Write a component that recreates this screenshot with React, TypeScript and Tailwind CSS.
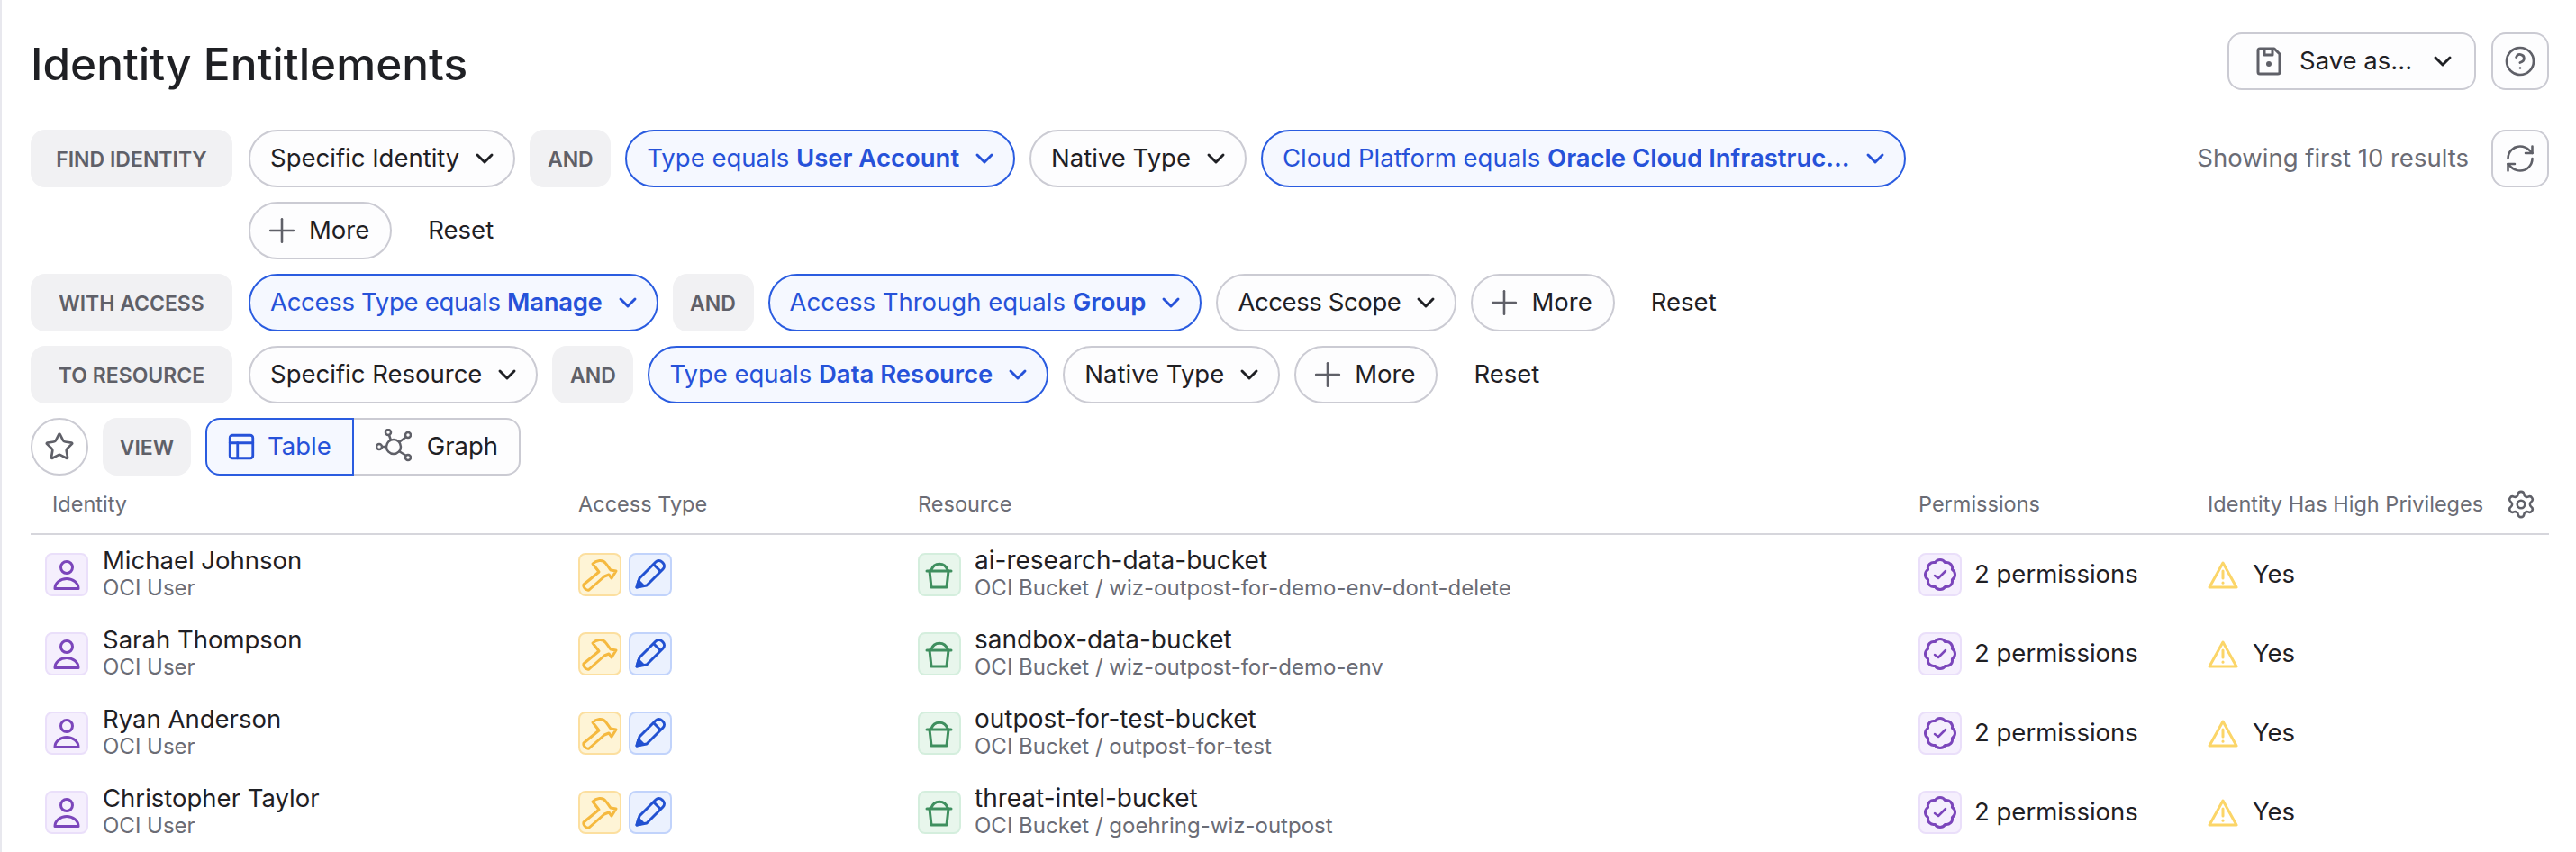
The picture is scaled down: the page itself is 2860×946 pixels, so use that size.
import React from "react";
import { ChevronDown, CircleHelp, PanelsTopLeft, Plus, RefreshCw, Settings, Star } from "lucide-react";

const chipBase =
  "flex h-16 shrink-0 items-center gap-3 rounded-full border-2 pl-[22px] pr-[16px] text-[27.5px] whitespace-nowrap";

const Chip = ({ label, tracking = "" }: { label: string; tracking?: string }) => (
  <button className={`${chipBase} border-[#cbcbd3] bg-[#fdfdfe] text-[#1f2024]`}>
    <span className={tracking}>{label}</span>
    <ChevronDown size={32} strokeWidth={2.2} />
  </button>
);

const ActiveChip = ({ label, value, tracking = "" }: { label: string; value: string; tracking?: string }) => (
  <button className={`${chipBase} border-[#2a5ce0] bg-[#f5f8ff] text-[#2652d9]`}>
    <span className={tracking}>
      {label} <span className="font-semibold">{value}</span>
    </span>
    <ChevronDown size={32} strokeWidth={2.2} />
  </button>
);

const Tag = ({ children, width }: { children: React.ReactNode; width: string }) => (
  <div
    className={`flex h-16 shrink-0 items-center justify-center rounded-2xl bg-[#f1f1f3] pt-0.5 text-[23px] font-semibold text-[#5f6068] ${width}`}
  >
    {children}
  </div>
);

const More = () => (
  <button className="flex h-16 shrink-0 items-center gap-2 rounded-full border-2 border-[#cbcbd3] bg-[#fdfdfe] pl-[13px] pr-[23px] text-[27.5px] text-[#1f2024]">
    <Plus size={44} strokeWidth={1.4} className="text-[#5f6068]" />
    More
  </button>
);

const Reset = () => <button className="ml-6 text-[27.5px] text-[#1f2024]">Reset</button>;

const IconBox = ({ tone, children }: { tone: string; children: React.ReactNode }) => (
  <div className={`flex h-12 w-12 shrink-0 items-center justify-center rounded-lg border-2 ${tone}`}>
    <svg
      width="44"
      height="44"
      viewBox="2 2 44 44"
      fill="none"
      stroke="currentColor"
      strokeWidth="3"
      strokeLinecap="round"
      strokeLinejoin="round"
    >
      {children}
    </svg>
  </div>
);

const purple = "border-[#eadffa] bg-[#f5effd] text-[#7b46bb]";

const UserIcon = () => (
  <IconBox tone={purple}>
    <circle cx="24" cy="16" r="6.5" />
    <path d="M11 39.5a13 11 0 0 1 26 0z" />
  </IconBox>
);

const HammerIcon = () => (
  <IconBox tone="border-[#fcdf9f] bg-[#fef4d6] text-[#f5b93f]">
    <path d="M23 21 16 12C20 8 27 7 30 11C33 14 34 17 36 19L42 20 37 28 34 24 29 26 12 41C9 42 5 38 6 35Z" />
  </IconBox>
);

const PencilIcon = () => (
  <IconBox tone="border-[#c1d3fb] bg-[#ebf1fe] text-[#2251d1]">
    <path d="M9 38 12 28 30 10C32 8 35 8 37 10L38 11C40 13 40 16 38 18L20 36Z" />
    <path d="M9 38 11 31 16 36Z" fill="currentColor" />
    <path d="M28 13 35 20" />
  </IconBox>
);

const BucketIcon = () => (
  <IconBox tone="border-[#d4eedd] bg-[#e8f6ec] text-[#3f8f5f]">
    <path d="M15 19A9.5 10 0 0 1 33 19" />
    <path d="M10 20H37" />
    <path d="M13 20 15 38H32L34 20" />
  </IconBox>
);

// eight bumps round the badge
const badgePath =
  Array.from({ length: 8 }, (_, i) => {
    const a = ((i + 0.5) * Math.PI) / 4;
    const x = (24 + 14.5 * Math.cos(a)).toFixed(2);
    const y = (24 + 14.5 * Math.sin(a)).toFixed(2);
    return i === 0 ? `M${x} ${y}` : `A6.5 6.5 0 0 1 ${x} ${y}`;
  }).join("") +
  `A6.5 6.5 0 0 1 ${(24 + 14.5 * Math.cos(Math.PI / 8)).toFixed(2)} ${(24 + 14.5 * Math.sin(Math.PI / 8)).toFixed(2)}Z`;

const BadgeIcon = () => (
  <IconBox tone={purple}>
    <path d={badgePath} />
    <path d="M18 25 22 28 30 20" strokeWidth="2.5" />
  </IconBox>
);

const WarnIcon = () => (
  <svg width="34" height="32" viewBox="0 0 34 32" fill="none" stroke="#fbd568" strokeWidth="3" strokeLinecap="round" strokeLinejoin="round">
    <path d="M17 3 32 30H2Z" />
    <path d="M17 12V20" />
    <path d="M17 25V25.2" />
  </svg>
);

const SaveIcon = () => (
  <svg width="28" height="32" viewBox="0 0 28 32" fill="none" stroke="#5f6068" strokeWidth="3" strokeLinejoin="round">
    <path d="M2 4a2 2 0 0 1 2-2h16l6 6v20a2 2 0 0 1-2 2H4a2 2 0 0 1-2-2Z" />
    <path d="M9 2v7h9V2" />
    <circle cx="14" cy="19" r="3" fill="#5f6068" stroke="none" />
  </svg>
);

const GraphIcon = () => (
  <svg width="40" height="40" viewBox="0 0 40 40" fill="none" stroke="#5f6068" strokeWidth="2.5">
    <circle cx="20" cy="20" r="8" />
    <circle cx="14" cy="4" r="3" />
    <circle cx="36" cy="7" r="3" />
    <circle cx="4" cy="20" r="3" />
    <circle cx="36" cy="32" r="3" />
    <path d="M15 7 17 13M34 9 26 15M7 20H12M34 30 26 25" />
  </svg>
);

const SquareButton = ({ children }: { children: React.ReactNode }) => (
  <button className="flex h-16 w-16 shrink-0 items-center justify-center rounded-2xl border-2 border-[#cbcbd3] bg-[#fdfdfe] text-[#5f6068]">
    {children}
  </button>
);

const columns = "grid grid-cols-[608px_377px_1111px_321px_1fr] items-center";

const rows = [
  { name: "Michael Johnson", bucket: "ai-research-data-bucket", path: "OCI Bucket / wiz-outpost-for-demo-env-dont-delete" },
  { name: "Sarah Thompson", bucket: "sandbox-data-bucket", path: "OCI Bucket / wiz-outpost-for-demo-env" },
  { name: "Ryan Anderson", bucket: "outpost-for-test-bucket", path: "OCI Bucket / outpost-for-test" },
  { name: "Christopher Taylor", bucket: "threat-intel-bucket", path: "OCI Bucket / goehring-wiz-outpost" },
];

const TwoLines = ({ top, bottom, size }: { top: string; bottom: string; size: string }) => (
  <div className="flex flex-col">
    <span className={`${size} leading-[30px] text-[#1f2024]`}>{top}</span>
    <span className="text-[24px] leading-8 text-[#6b6c75]">{bottom}</span>
  </div>
);

export default function App() {
  return (
    <div
      className="h-[946px] overflow-hidden border-l-2 border-[#e8e8ee] bg-white pl-8 pr-[30px] pt-9"
      style={{ fontFamily: "Inter, 'Liberation Sans', sans-serif" }}
    >
      <div className="flex h-16 items-center justify-between">
        <h1 className="mt-[7px] text-[49.5px] font-medium text-[#1f2024]">Identity Entitlements</h1>
        <div className="flex gap-[17px]">
          <button className="flex h-16 w-[276px] items-center gap-[20px] rounded-2xl border-2 border-[#cbcbd3] bg-[#fdfdfe] pl-[30px] text-[27.5px] text-[#1f2024]">
            <SaveIcon />
            Save as...
            <ChevronDown size={32} strokeWidth={2.2} className="-ml-[2px]" />
          </button>
          <SquareButton>
            <CircleHelp size={36} strokeWidth={1.8} />
          </SquareButton>
        </div>
      </div>

      <div className="mt-11 flex flex-col gap-4">
        <div className="flex items-start gap-4">
          <Tag width="mr-0.5 w-56">FIND IDENTITY</Tag>
          <div className="flex w-[1900px] flex-wrap items-center gap-x-4 gap-y-4">
            <Chip label="Specific Identity" />
            <Tag width="w-[90px]">AND</Tag>
            <ActiveChip label="Type equals" value="User Account" />
            <Chip label="Native Type" />
            <ActiveChip label="Cloud Platform equals" value="Oracle Cloud Infrastruc..." />
            <More />
            <Reset />
          </div>
          <div className="ml-auto flex items-center gap-[25px]">
            <span className="text-[27.5px] text-[#6b6c75]">Showing first 10 results</span>
            <SquareButton>
              <RefreshCw size={36} strokeWidth={1.7} />
            </SquareButton>
          </div>
        </div>

        <div className="flex items-center gap-4">
          <Tag width="mr-0.5 w-56">WITH ACCESS</Tag>
          <ActiveChip label="Access Type equals" value="Manage" tracking="tracking-[-0.3px]" />
          <Tag width="w-[90px]">AND</Tag>
          <ActiveChip label="Access Through equals" value="Group" />
          <Chip label="Access Scope" tracking="tracking-[-0.4px]" />
          <More />
          <Reset />
        </div>

        <div className="flex items-center gap-4">
          <Tag width="mr-0.5 w-56">TO RESOURCE</Tag>
          <Chip label="Specific Resource" />
          <Tag width="w-[90px]">AND</Tag>
          <ActiveChip label="Type equals" value="Data Resource" />
          <Chip label="Native Type" />
          <More />
          <Reset />
        </div>

        <div className="flex items-center">
          <button className="flex h-16 w-16 items-center justify-center rounded-full border-2 border-[#cbcbd3] text-[#5f6068]">
            <Star size={34} strokeWidth={1.9} />
          </button>
          <div className="ml-4">
            <Tag width="w-[98px]">VIEW</Tag>
          </div>
          <div className="ml-4 flex h-16">
            <button className="flex items-center gap-3 rounded-l-2xl border-2 border-[#2a5ce0] bg-[#f5f8ff] pl-[21px] pr-[23px] text-[27.5px] text-[#2652d9]">
              <PanelsTopLeft size={34} strokeWidth={2} />
              Table
            </button>
            <button className="flex items-center gap-[17px] rounded-r-2xl border-2 border-l-0 border-[#cbcbd3] bg-[#fdfdfe] pl-6 pr-[23px] text-[27.5px] text-[#1f2024]">
              <GraphIcon />
              Graph
            </button>
          </div>
        </div>
      </div>

      <div className={`${columns} h-[66px] border-b-2 border-[#d6d6dc] text-[23.5px] text-[#6b6c75]`}>
        <span className="pl-6">Identity</span>
        <span>Access Type</span>
        <span>Resource</span>
        <span>Permissions</span>
        <div className="flex items-center justify-between pr-[14px]">
          <span>Identity Has High Privileges</span>
          <Settings size={34} strokeWidth={1.8} className="text-[#5f6068]" />
        </div>
      </div>

      {rows.map((row) => (
        <div key={row.name} className={`${columns} h-[88px]`}>
          <div className="flex items-center gap-4 pl-4">
            <UserIcon />
            <TwoLines top={row.name} bottom="OCI User" size="text-[27.5px]" />
          </div>
          <div className="flex gap-2">
            <HammerIcon />
            <PencilIcon />
          </div>
          <div className="flex items-center gap-[15px]">
            <BucketIcon />
            <TwoLines top={row.bucket} bottom={row.path} size="text-[28px]" />
          </div>
          <div className="flex items-center gap-[14px] text-[27.5px] text-[#1f2024]">
            <BadgeIcon />
            2 permissions
          </div>
          <div className="flex items-center gap-4 text-[27.5px] text-[#1f2024]">
            <WarnIcon />
            Yes
          </div>
        </div>
      ))}
    </div>
  );
}
